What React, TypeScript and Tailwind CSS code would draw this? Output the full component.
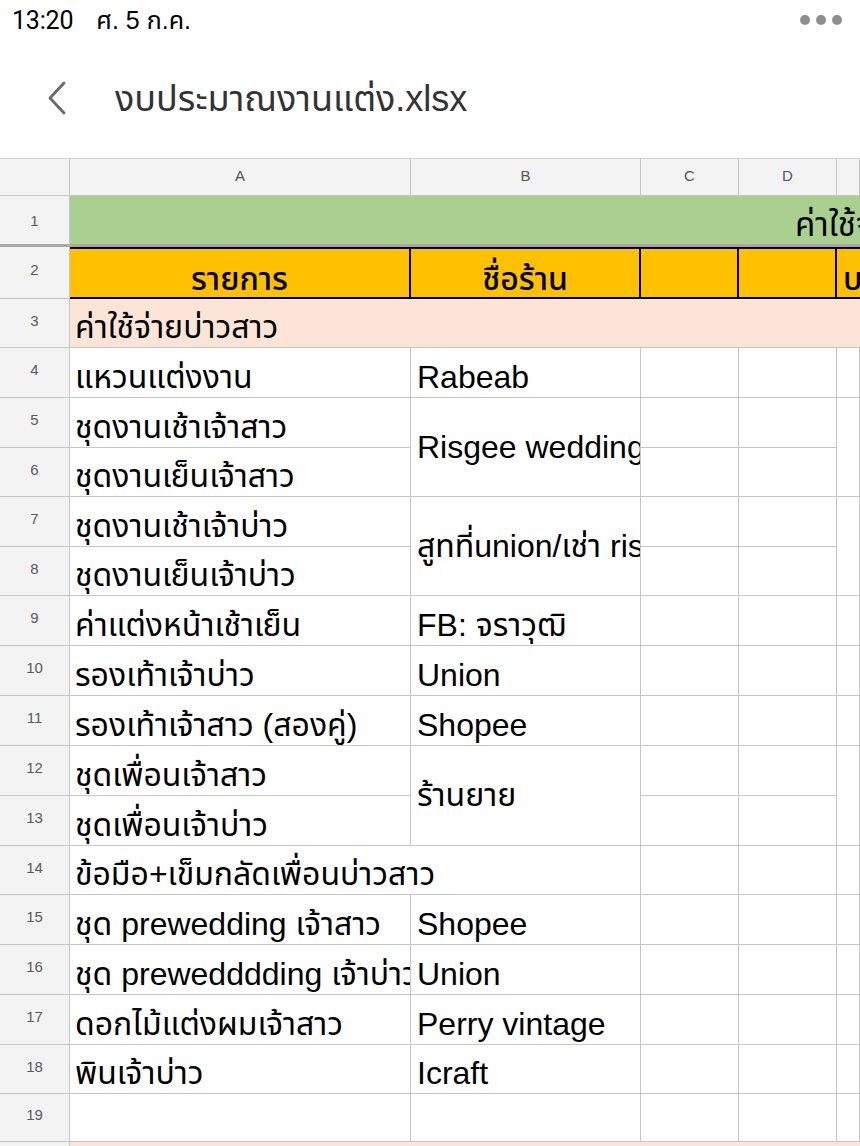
import React from "react";

const LINE = "border-[#c6c6c6]";

function Num({ n }: { n: number | string }) {
  return (
    <div
      className={`bg-[#f3f3f3] border-r border-b ${LINE} flex items-center justify-center text-[15px] text-[#5a5a5a] pb-[4px]`}
    >
      {n}
    </div>
  );
}

function Cell({
  children,
  className = "",
  mid = false,
}: {
  children?: React.ReactNode;
  className?: string;
  mid?: boolean;
}) {
  return (
    <div
      className={`bg-white border-r border-b ${LINE} flex ${
        mid ? "items-center pb-[1px] leading-[44px]" : "items-end pb-0 leading-[40px]"
      } overflow-hidden whitespace-nowrap text-[32px] text-black ${className}`}
    >
      {children}
    </div>
  );
}

export default function App() {
  return (
    <div className="w-[860px] h-[1146px] overflow-hidden bg-white font-['Liberation_Sans','Noto_Sans_Thai',sans-serif]">
      {/* status bar */}
      <div className="h-[40px] flex items-center px-[12px] pt-[1px]">
        <span className="text-[25px] text-black font-['Roboto',sans-serif] tracking-[-0.2px]">13:20</span>
        <span className="ml-[23px] text-[25px] text-black">ศ. 5 ก.ค.</span>
        <div className="ml-auto flex gap-[6px] pr-[6px] mb-[2px]">
          <div className="w-[10px] h-[10px] rounded-full bg-[#8e8e8e]" />
          <div className="w-[10px] h-[10px] rounded-full bg-[#8e8e8e]" />
          <div className="w-[10px] h-[10px] rounded-full bg-[#8e8e8e]" />
        </div>
      </div>
      {/* title bar */}
      <div className="h-[118px] flex items-center pl-[43px]">
        <svg width="26" height="36" viewBox="0 0 26 36" className="mb-[2px]">
          <path d="M21 3 L7 18 L21 33" stroke="#6a6a6a" strokeWidth="2.8" fill="none" strokeLinecap="round" strokeLinejoin="round" />
        </svg>
        <span className="ml-[46px] text-[36px] text-[#333]">งบประมาณงานแต่ง.xlsx</span>
      </div>

      {/* sheet */}
      <div className="border-t border-[#cfcfcf] grid grid-cols-[70px_341px_230px_98px_98px_1fr] grid-rows-[37px_51px_52px_49px_50px_50px_49px_50px_49px_50px_50px_50px_50px_50px_49px_50px_50px_50px_49px_48px_40px]">
        {/* header row */}
        <div className={`bg-[#f3f3f3] border-r border-b ${LINE}`} />
        {["A", "B", "C", "D", ""].map((l, i) => (
          <div
            key={i}
            className={`bg-[#f3f3f3] border-r border-b ${LINE} flex items-center justify-center text-[15px] text-[#555] pb-[1px]`}
          >
            {l}
          </div>
        ))}

        {/* row 1 */}
        <div className="bg-[#f3f3f3] border-r border-[#c6c6c6] border-b-[3px] border-b-[#a8a8a8] flex items-center justify-center text-[15px] text-[#5a5a5a] pt-[2px]">
          1
        </div>
        <div className="col-span-5 bg-[#a9d08e] border-b-[3px] border-[#a8a8a8] overflow-hidden whitespace-nowrap flex items-end">
          <span className="pl-[725px] text-[33px] leading-[38px] text-black">ค่าใช้จ่ายงานแต่งงาน</span>
        </div>

        {/* row 2 */}
        <Num n={2} />
        <div className="bg-[#ffc000] border-t-2 border-b-2 border-r-2 border-black flex items-end justify-center text-[32px] leading-[36px] font-medium whitespace-nowrap">
          รายการ
        </div>
        <div className="bg-[#ffc000] border-t-2 border-b-2 border-r-2 border-black flex items-end justify-center text-[32px] leading-[36px] font-medium whitespace-nowrap">
          ชื่อร้าน
        </div>
        <div className="bg-[#ffc000] border-t-2 border-b-2 border-r-2 border-black" />
        <div className="bg-[#ffc000] border-t-2 border-b-2 border-r-2 border-black" />
        <div className="bg-[#ffc000] border-t-2 border-b-2 border-black flex items-end pl-[6px] text-[32px] leading-[36px] font-medium whitespace-nowrap overflow-hidden">
          บาท
        </div>

        {/* row 3 */}
        <Num n={3} />
        <div className={`col-span-5 bg-[#fce4d6] border-b ${LINE} flex items-end pl-[5px] text-[32px] leading-[40px] whitespace-nowrap overflow-hidden`}>
          ค่าใช้จ่ายบ่าวสาว
        </div>

        {/* row 4 */}
        <Num n={4} />
        <Cell className="pl-[5px]">แหวนแต่งงาน</Cell>
        <Cell className="pl-[6px]">Rabeab</Cell>
        <Cell />
        <Cell />
        <Cell />

        {/* rows 5-6 */}
        <Num n={5} />
        <Cell className="pl-[5px] overflow-visible">ชุดงานเช้าเจ้าสาว</Cell>
        <Cell mid className="row-span-2 pl-[6px]">Risgee wedding</Cell>
        <Cell />
        <Cell />
        <Cell className="row-span-2" />
        <Num n={6} />
        <Cell className="pl-[5px] overflow-visible">ชุดงานเย็นเจ้าสาว</Cell>
        <Cell />
        <Cell />

        {/* rows 7-8 */}
        <Num n={7} />
        <Cell className="pl-[5px] overflow-visible">ชุดงานเช้าเจ้าบ่าว</Cell>
        <Cell mid className="row-span-2 pl-[6px]">สูทที่union/เช่า risgee</Cell>
        <Cell />
        <Cell />
        <Cell className="row-span-2" />
        <Num n={8} />
        <Cell className="pl-[5px] overflow-visible">ชุดงานเย็นเจ้าบ่าว</Cell>
        <Cell />
        <Cell />

        {/* row 9 */}
        <Num n={9} />
        <Cell className="pl-[5px]">ค่าแต่งหน้าเช้าเย็น</Cell>
        <Cell className="pl-[6px]">FB: จราวุฒิ</Cell>
        <Cell />
        <Cell />
        <Cell />

        {/* row 10 */}
        <Num n={10} />
        <Cell className="pl-[5px]">รองเท้าเจ้าบ่าว</Cell>
        <Cell className="pl-[6px]">Union</Cell>
        <Cell />
        <Cell />
        <Cell />

        {/* row 11 */}
        <Num n={11} />
        <Cell className="pl-[5px]">รองเท้าเจ้าสาว (สองคู่)</Cell>
        <Cell className="pl-[6px]">Shopee</Cell>
        <Cell />
        <Cell />
        <Cell />

        {/* rows 12-13 */}
        <Num n={12} />
        <Cell className="pl-[5px] overflow-visible">ชุดเพื่อนเจ้าสาว</Cell>
        <Cell mid className="row-span-2 pl-[6px]">ร้านยาย</Cell>
        <Cell />
        <Cell />
        <Cell className="row-span-2" />
        <Num n={13} />
        <Cell className="pl-[5px] overflow-visible">ชุดเพื่อนเจ้าบ่าว</Cell>
        <Cell />
        <Cell />

        {/* row 14 */}
        <Num n={14} />
        <Cell className="col-span-2 pl-[5px]">ข้อมือ+เข็มกลัดเพื่อนบ่าวสาว</Cell>
        <Cell />
        <Cell />
        <Cell />

        {/* row 15 */}
        <Num n={15} />
        <Cell className="pl-[5px]">ชุด prewedding เจ้าสาว</Cell>
        <Cell className="pl-[6px]">Shopee</Cell>
        <Cell />
        <Cell />
        <Cell />

        {/* row 16 */}
        <Num n={16} />
        <Cell className="pl-[5px]">ชุด prewedddding เจ้าบ่าว</Cell>
        <Cell className="pl-[6px]">Union</Cell>
        <Cell />
        <Cell />
        <Cell />

        {/* row 17 */}
        <Num n={17} />
        <Cell className="pl-[5px]">ดอกไม้แต่งผมเจ้าสาว</Cell>
        <Cell className="pl-[6px]">Perry vintage</Cell>
        <Cell />
        <Cell />
        <Cell />

        {/* row 18 */}
        <Num n={18} />
        <Cell className="pl-[5px]">พินเจ้าบ่าว</Cell>
        <Cell className="pl-[6px]">Icraft</Cell>
        <Cell />
        <Cell />
        <Cell />

        {/* row 19 */}
        <Num n={19} />
        <Cell />
        <Cell />
        <Cell />
        <Cell />
        <Cell />

        {/* row 20 */}
        <Num n={20} />
        <div className="col-span-5 bg-[#fce4d6]" />
      </div>
    </div>
  );
}
